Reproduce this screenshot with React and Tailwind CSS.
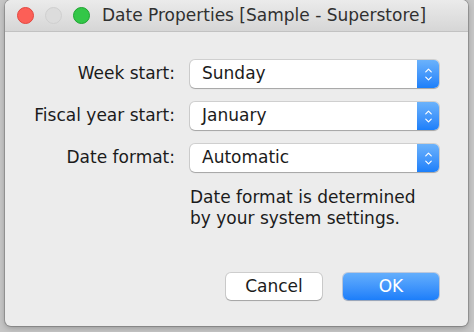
import { ChevronUp, ChevronDown } from "lucide-react";

const FONT = { fontFamily: '"DejaVu Sans", "Liberation Sans", sans-serif' };

function Select({ value }) {
  return (
    <div className="flex h-[28px] w-[249px] rounded-[5px] bg-white shadow-[0_0_0_1px_rgba(0,0,0,0.12),0_1px_1px_rgba(0,0,0,0.2)]">
      <div className="flex flex-1 items-center pl-[12px] text-[17px] text-[#1b1b1b]">{value}</div>
      <div className="flex w-[22px] flex-col items-center justify-center rounded-r-[5px] bg-gradient-to-b from-[#6bb2fb] to-[#1b7ffa] text-white">
        <ChevronUp className="-mb-[3px] h-[11px] w-[11px]" strokeWidth={2.6} />
        <ChevronDown className="h-[11px] w-[11px]" strokeWidth={2.6} />
      </div>
    </div>
  );
}

export default function App() {
  const rows = [
    ["Week start:", "Sunday"],
    ["Fiscal year start:", "January"],
    ["Date format:", "Automatic"],
  ];

  return (
    <div className="h-[332px] w-[474px] overflow-hidden bg-[#c6c6c6] pl-[5px]" style={FONT}>
      <div className="flex h-[326px] w-[463px] flex-col overflow-hidden rounded-[6px] bg-[#ececec] shadow-[0_0_0_1px_rgba(0,0,0,0.18),0_2px_6px_rgba(0,0,0,0.25)]">
        {/* Title bar */}
        <div className="flex h-[32px] shrink-0 items-center border-b border-[#c2c2c2] bg-gradient-to-b from-[#ebebeb] to-[#d6d6d6] pl-[12px]">
          <div className="flex gap-[11px]">
            <span className="h-[17px] w-[17px] rounded-full border border-[#e2463f] bg-[#fc5f57]" />
            <span className="h-[17px] w-[17px] rounded-full border border-[#cfcfcf] bg-[#dcdcdc]" />
            <span className="h-[17px] w-[17px] rounded-full border border-[#1ea431] bg-[#33c748]" />
          </div>
          <div className="ml-[12px] text-[17px] text-[#303030]">Date Properties [Sample - Superstore]</div>
        </div>

        {/* Form */}
        <div className="grid grid-cols-[170px_249px] gap-x-[15px] gap-y-[14px] pt-[28px]">
          {rows.map(([label, value]) => (
            <div key={label} className="contents">
              <div className="flex items-center justify-end text-[17px] text-[#1b1b1b]">{label}</div>
              <Select value={value} />
            </div>
          ))}
          <div />
          <div className="mt-[1px] text-[17px] leading-[21px] text-[#1b1b1b]">
            Date format is determined
            <br />
            by your system settings.
          </div>
        </div>

        {/* Buttons */}
        <div className="mt-auto mb-[26px] flex justify-end gap-[21px] pr-[29px]">
          <button className="h-[27px] w-[96px] rounded-[5px] bg-white text-[17px] text-[#1b1b1b] shadow-[0_0_0_1px_rgba(0,0,0,0.13),0_1px_1px_rgba(0,0,0,0.2)]">
            Cancel
          </button>
          <button className="h-[27px] w-[96px] rounded-[5px] bg-gradient-to-b from-[#63aefc] to-[#1b7efa] text-[17px] text-white shadow-[0_0_0_1px_rgba(0,60,160,0.2),0_1px_1px_rgba(0,0,0,0.2)]">
            OK
          </button>
        </div>
      </div>
    </div>
  );
}
